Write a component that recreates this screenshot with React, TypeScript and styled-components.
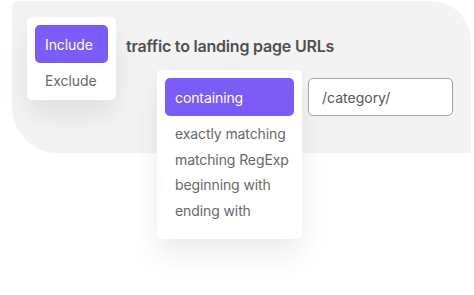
import React from 'react'
import styled, { createGlobalStyle } from 'styled-components'

const Global = createGlobalStyle`
    body {
        margin: 0;
        background: #ffffff;
        font-family: Inter, "Noto Sans", sans-serif;
    }
`

const Page = styled.div`
    width: 474px;
    height: 295px;
    overflow: hidden;
    position: relative;
`

const Panel = styled.div`
    margin: 1px 0 0 12px;
    width: 459px;
    height: 152px;
    box-sizing: border-box;
    background: #f3f3f4;
    border-radius: 6px 40px 0 46px;
    padding: 16px 0 0 15px;
    display: grid;
    grid-template-columns: 89px auto;
    column-gap: 10px;
    align-items: start;
`

const Card = styled.div`
    background: #ffffff;
    border-radius: 5px;
    padding: 8px;
    box-sizing: border-box;
    box-shadow: 0 16px 30px rgba(0, 0, 0, 0.08);
    display: flex;
    flex-direction: column;
`

const ChoiceCard = styled(Card)`
    width: 89px;
    height: 83px;
`

const DropCard = styled(Card)`
    width: 145px;
    height: 169px;
`

const Option = styled.div<{ $active?: boolean }>`
    height: ${({ $active }) => ($active ? '38px' : '25.5px')};
    border-radius: 5px;
    display: flex;
    align-items: center;
    padding-left: 10px;
    background: ${({ $active }) => ($active ? '#7b5cf6' : 'transparent')};
    color: ${({ $active }) => ($active ? '#ffffff' : '#686868')};
    font-size: 14px;
    font-weight: 400;
    letter-spacing: -0.1px;
    white-space: nowrap;
`

const ChoiceList = styled.div`
    display: flex;
    flex-direction: column;
`

const Spacer = styled.div<{ $h: number }>`
    height: ${({ $h }) => $h}px;
    flex: none;
`

const Right = styled.div`
    display: flex;
    flex-direction: column;
`

const Title = styled.div`
    height: 53px;
    display: flex;
    align-items: center;
    padding-top: 5px;
    box-sizing: border-box;
    font-size: 16px;
    font-weight: 600;
    color: #505050;
    letter-spacing: -0.2px;
    white-space: nowrap;
`

const FilterRow = styled.div`
    display: flex;
    align-items: flex-start;
    gap: 6px;
    margin-left: 31px;
`

const Field = styled.div`
    margin-top: 8px;
    width: 145px;
    height: 38px;
    box-sizing: border-box;
    background: #ffffff;
    border: 1px solid #a3a3a3;
    border-radius: 5px;
    display: flex;
    align-items: center;
    padding-left: 13px;
    font-size: 14px;
    color: #555555;
`

const matches = ['exactly matching', 'matching RegExp', 'beginning with', 'ending with']

export default function App() {
    return (
        <>
            <Global />
            <Page>
                <Panel>
                    <ChoiceCard>
                        <ChoiceList>
                            <Option $active>Include</Option>
                            <Spacer $h={5} />
                            <Option>Exclude</Option>
                        </ChoiceList>
                    </ChoiceCard>
                    <Right>
                        <Title>traffic to landing page URLs</Title>
                        <FilterRow>
                            <DropCard>
                                <Option $active>containing</Option>
                                <Spacer $h={5} />
                                {matches.map((m) => (
                                    <Option key={m}>{m}</Option>
                                ))}
                            </DropCard>
                            <Field>/category/</Field>
                        </FilterRow>
                    </Right>
                </Panel>
            </Page>
        </>
    )
}
